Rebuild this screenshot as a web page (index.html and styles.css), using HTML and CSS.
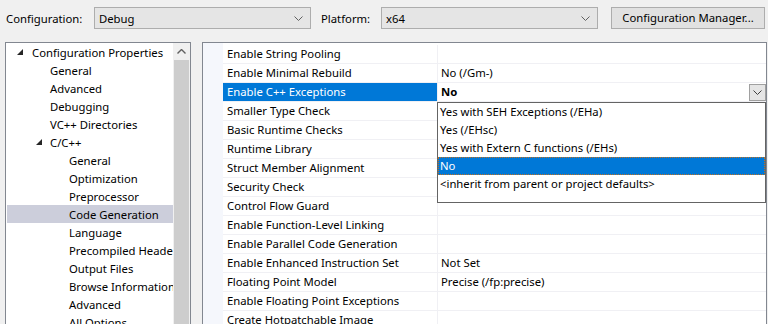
FILE: index.html
```html
<!DOCTYPE html>
<html lang="en">
<head>
    <meta charset="UTF-8">
    <title>Property Pages</title>
    <link rel="stylesheet" href="styles.css">
</head>
<body>
    <!-- configuration / platform bar -->
    <div class="top-bar">
        <span class="label label-config">Configuration:</span>
        <div class="combo combo-config">
            <span>Debug</span>
            <svg class="chev" width="9" height="5" viewBox="0 0 9 5"><path d="M0.5 0.5 L4.5 4.5 L8.5 0.5" fill="none" stroke="#606060"/></svg>
        </div>
        <span class="label label-platform">Platform:</span>
        <div class="combo combo-platform">
            <span>x64</span>
            <svg class="chev" width="9" height="5" viewBox="0 0 9 5"><path d="M0.5 0.5 L4.5 4.5 L8.5 0.5" fill="none" stroke="#606060"/></svg>
        </div>
        <div class="button">Configuration Manager...</div>
    </div>

    <div class="main">
        <!-- tree on the left -->
        <div class="tree-panel">
            <div class="tree">
                <div class="node lvl0">
                    <svg class="arrow" width="6" height="6" viewBox="0 0 6 6"><polygon points="6,0 6,6 0,6" fill="#262626"/></svg>
                    Configuration Properties
                </div>
                <div class="node lvl1">General</div>
                <div class="node lvl1">Advanced</div>
                <div class="node lvl1">Debugging</div>
                <div class="node lvl1">VC++ Directories</div>
                <div class="node lvl1">
                    <svg class="arrow" width="6" height="6" viewBox="0 0 6 6"><polygon points="6,0 6,6 0,6" fill="#262626"/></svg>
                    C/C++
                </div>
                <div class="node lvl2">General</div>
                <div class="node lvl2">Optimization</div>
                <div class="node lvl2">Preprocessor</div>
                <div class="node lvl2 selected">Code Generation</div>
                <div class="node lvl2">Language</div>
                <div class="node lvl2">Precompiled Headers</div>
                <div class="node lvl2">Output Files</div>
                <div class="node lvl2">Browse Information</div>
                <div class="node lvl2">Advanced</div>
                <div class="node lvl2">All Options</div>
            </div>
            <div class="scrollbar">
                <div class="scroll-up">
                    <svg width="9" height="5" viewBox="0 0 9 5"><path d="M0.5 4.5 L4.5 0.5 L8.5 4.5" fill="none" stroke="#606060" stroke-width="1.4"/></svg>
                </div>
                <div class="thumb"></div>
            </div>
        </div>

        <!-- property grid -->
        <div class="grid-panel">
            <div class="strip"></div>
            <div class="rows">
                <div class="row"><div class="name">Enable String Pooling</div><div class="value"></div></div>
                <div class="row"><div class="name">Enable Minimal Rebuild</div><div class="value">No (/Gm-)</div></div>
                <div class="row active">
                    <div class="name">Enable C++ Exceptions</div>
                    <div class="value">
                        <b>No</b>
                        <div class="drop-btn">
                            <svg width="9" height="5" viewBox="0 0 9 5"><path d="M0.5 0.5 L4.5 4.5 L8.5 0.5" fill="none" stroke="#404040"/></svg>
                        </div>
                        <div class="dropdown">
                            <div class="option">Yes with SEH Exceptions (/EHa)</div>
                            <div class="option">Yes (/EHsc)</div>
                            <div class="option">Yes with Extern C functions (/EHs)</div>
                            <div class="option picked">No</div>
                            <div class="option">&lt;inherit from parent or project defaults&gt;</div>
                        </div>
                    </div>
                </div>
                <div class="row"><div class="name">Smaller Type Check</div><div class="value"></div></div>
                <div class="row"><div class="name">Basic Runtime Checks</div><div class="value"></div></div>
                <div class="row"><div class="name">Runtime Library</div><div class="value"></div></div>
                <div class="row"><div class="name">Struct Member Alignment</div><div class="value"></div></div>
                <div class="row"><div class="name">Security Check</div><div class="value"></div></div>
                <div class="row"><div class="name">Control Flow Guard</div><div class="value"></div></div>
                <div class="row"><div class="name">Enable Function-Level Linking</div><div class="value"></div></div>
                <div class="row"><div class="name">Enable Parallel Code Generation</div><div class="value"></div></div>
                <div class="row"><div class="name">Enable Enhanced Instruction Set</div><div class="value">Not Set</div></div>
                <div class="row"><div class="name">Floating Point Model</div><div class="value">Precise (/fp:precise)</div></div>
                <div class="row"><div class="name">Enable Floating Point Exceptions</div><div class="value"></div></div>
                <div class="row"><div class="name">Create Hotpatchable Image</div><div class="value"></div></div>
            </div>
        </div>
    </div>
</body>
</html>
```

FILE: styles.css
```css
/* Reset default styles */
body, html, div {
    margin: 0;
    padding: 0;
}

body {
    background: #f0f0f0;
    font-family: "Noto Sans", "Open Sans", sans-serif;
    font-size: 11.3px;
    color: #000;
    overflow: hidden;
    height: 324px;
}

.top-bar {
    display: flex;
    align-items: center;
    height: 22px;
    padding: 7px 0 0 6px;
}

.label {
    white-space: nowrap;
}

.label-config {
    width: 88px;
}

.label-platform {
    width: 60px;
    margin-left: 10px;
}

.combo {
    display: flex;
    align-items: center;
    justify-content: space-between;
    box-sizing: border-box;
    height: 22px;
    width: 217px;
    padding: 0 7px 0 4px;
    background: #e5e5e5;
    border: 1px solid #adadad;
}

.button {
    box-sizing: border-box;
    height: 22px;
    width: 154px;
    margin-left: 13px;
    background: #e1e1e1;
    border: 1px solid #adadad;
    text-align: center;
    line-height: 20px;
}

.main {
    display: flex;
    margin-top: 13px;
    height: 282px;
    overflow: hidden;
}

.tree-panel {
    display: flex;
    box-sizing: border-box;
    width: 186px;
    height: 300px;
    margin-left: 5px;
    background: #fff;
    border: 1px solid #828790;
}

.tree {
    flex: 1;
    overflow: hidden;
    padding-left: 1px;
}

.node {
    display: flex;
    align-items: center;
    height: 18px;
    white-space: nowrap;
    position: relative;
}

.lvl0 { padding-left: 25px; }
.lvl1 { padding-left: 43px; }
.lvl2 { padding-left: 62px; }

.arrow {
    position: absolute;
    top: 6px;
}

.lvl0 .arrow { left: 10px; }
.lvl1 .arrow { left: 29px; }

.node.selected {
    background: #cccedb;
}

.scrollbar {
    width: 17px;
    background: #f0f0f0;
    display: flex;
    flex-direction: column;
    align-items: center;
}

.scroll-up {
    height: 16px;
    display: flex;
    align-items: center;
    justify-content: center;
}

.thumb {
    flex: 1;
    width: 15px;
    margin-top: 1px;
    background: #cdcdcd;
}

.grid-panel {
    display: flex;
    box-sizing: border-box;
    width: 565px;
    height: 300px;
    margin-left: 11px;
    padding-top: 2px;
    background: #fff;
    border: 1px solid #828790;
}

.strip {
    width: 20px;
    margin-top: -2px;
    background: #f5f7fc;
}

.rows {
    flex: 1;
}

.row {
    display: flex;
    height: 18px;
    border-bottom: 1px solid #f0f0f4;
    white-space: nowrap;
}

.name {
    width: 210px;
    padding-left: 4px;
    line-height: 18px;
}

.value {
    position: relative;
    flex: 1;
    padding-left: 3px;
    border-left: 1px solid #f0f0f4;
    line-height: 18px;
}

.row.active .name {
    background: #0078d7;
    color: #fff;
}

.drop-btn {
    position: absolute;
    top: 1px;
    right: 0;
    box-sizing: border-box;
    width: 17px;
    height: 17px;
    background: #e5e5e5;
    border: 1px solid #a0a0a0;
    display: flex;
    align-items: center;
    justify-content: center;
}

.dropdown {
    position: absolute;
    top: 19px;
    left: -1px;
    right: 0;
    box-sizing: border-box;
    height: 101px;
    background: #fff;
    border: 1px solid #646464;
    z-index: 2;
}

.option {
    height: 18px;
    line-height: 18px;
    padding-left: 2px;
}

.option.picked {
    background: #0078d7;
    color: #fff;
    outline: 1px dotted #c07020;
    outline-offset: -1px;
}
```
